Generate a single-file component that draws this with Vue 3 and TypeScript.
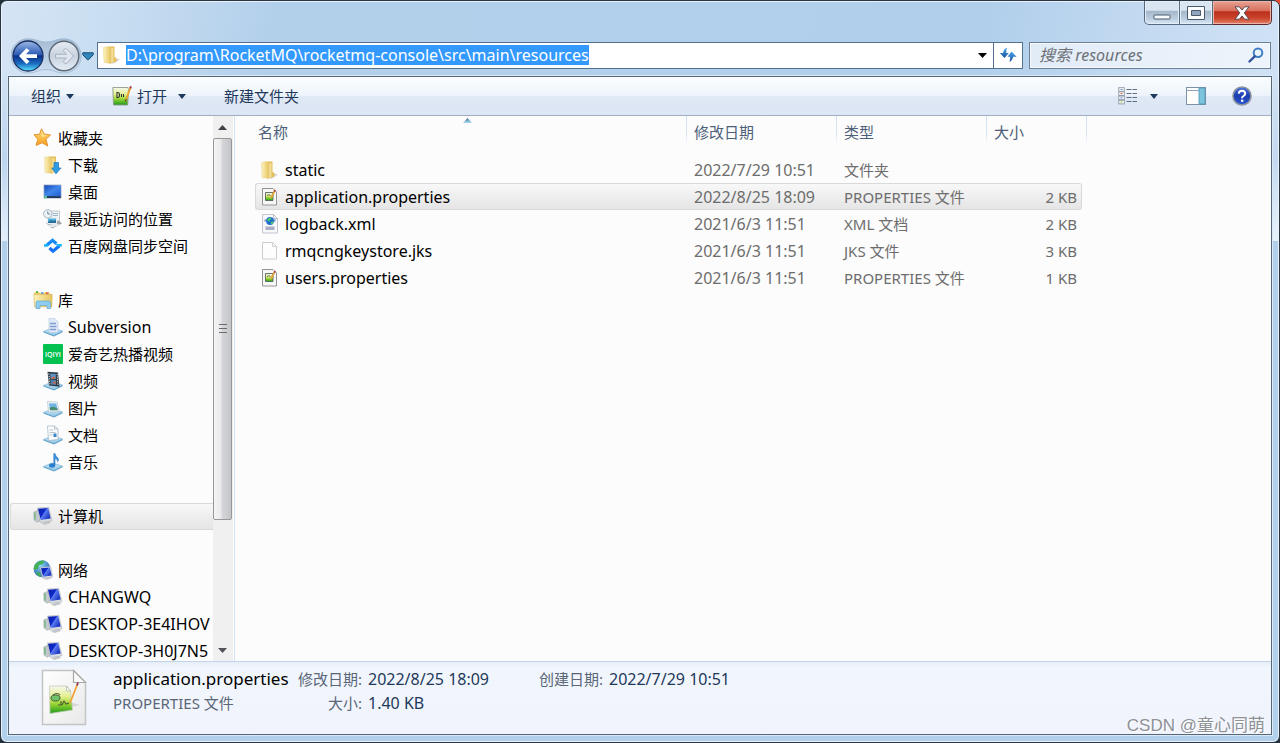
<script setup lang="ts">
import { onMounted, ref } from 'vue'

interface NavItem {
  label: string
  icon: string
}
interface NavGroup extends NavItem {
  selected?: boolean
  children: NavItem[]
}
interface FileRow {
  name: string
  icon: string
  modified: string
  type: string
  size: string
}

const path = ref('D:\\program\\RocketMQ\\rocketmq-console\\src\\main\\resources')
const query = ref('')
const addressInput = ref<HTMLInputElement | null>(null)
const selectedFile = ref('application.properties')

const groups: NavGroup[] = [
  {
    label: '收藏夹',
    icon: 'star',
    children: [
      { label: '下载', icon: 'download' },
      { label: '桌面', icon: 'desktop' },
      { label: '最近访问的位置', icon: 'recent' },
      { label: '百度网盘同步空间', icon: 'netdisk' },
    ],
  },
  {
    label: '库',
    icon: 'library',
    children: [
      { label: 'Subversion', icon: 'lib-svn' },
      { label: '爱奇艺热播视频', icon: 'iqiyi' },
      { label: '视频', icon: 'lib-video' },
      { label: '图片', icon: 'lib-picture' },
      { label: '文档', icon: 'lib-doc' },
      { label: '音乐', icon: 'lib-music' },
    ],
  },
  { label: '计算机', icon: 'computer', selected: true, children: [] },
  {
    label: '网络',
    icon: 'network',
    children: [
      { label: 'CHANGWQ', icon: 'computer' },
      { label: 'DESKTOP-3E4IHOV', icon: 'computer' },
      { label: 'DESKTOP-3H0J7N5', icon: 'computer' },
    ],
  },
]

const files: FileRow[] = [
  { name: 'static', icon: 'folder', modified: '2022/7/29 10:51', type: '文件夹', size: '' },
  { name: 'application.properties', icon: 'properties', modified: '2022/8/25 18:09', type: 'PROPERTIES 文件', size: '2 KB' },
  { name: 'logback.xml', icon: 'xml', modified: '2021/6/3 11:51', type: 'XML 文档', size: '2 KB' },
  { name: 'rmqcngkeystore.jks', icon: 'blank', modified: '2021/6/3 11:51', type: 'JKS 文件', size: '3 KB' },
  { name: 'users.properties', icon: 'properties', modified: '2021/6/3 11:51', type: 'PROPERTIES 文件', size: '1 KB' },
]

const isLatin = (label: string) => /^[\x20-\x7e]+$/.test(label)

onMounted(() => {
  addressInput.value?.focus()
  addressInput.value?.select()
})
</script>

<template>
  <svg class="sprite" aria-hidden="true">
    <defs>
      <linearGradient id="g-folder" x1="0" x2="1"><stop offset="0" stop-color="#fdf3c0" /><stop offset="1" stop-color="#e6c35c" /></linearGradient>
      <linearGradient id="g-star" x1="0" y1="0" x2="0" y2="1"><stop offset="0" stop-color="#ffe27a" /><stop offset="1" stop-color="#f59a1c" /></linearGradient>
      <linearGradient id="g-screen" x1="0" y1="0" x2="1" y2=".6"><stop offset="0" stop-color="#0a1fa8" /><stop offset=".5" stop-color="#1029c8" /><stop offset=".55" stop-color="#5c7cf2" /><stop offset="1" stop-color="#1b35c0" /></linearGradient>
      <linearGradient id="g-desk" x1="0" y1="0" x2="1" y2="1"><stop offset="0" stop-color="#1746b8" /><stop offset=".5" stop-color="#3f86ea" /><stop offset="1" stop-color="#1f5fd0" /></linearGradient>
      <linearGradient id="g-page" x1="0" y1="0" x2="1" y2="1"><stop offset="0" stop-color="#ffffff" /><stop offset="1" stop-color="#e9e9e9" /></linearGradient>
      <linearGradient id="g-green" x1="0" y1="0" x2="0" y2="1"><stop offset="0" stop-color="#f4f8ee" /><stop offset=".4" stop-color="#e4ee8a" /><stop offset=".65" stop-color="#9ad432" /><stop offset="1" stop-color="#1c9a1c" /></linearGradient>
      <linearGradient id="g-tray" x1="0" y1="0" x2="0" y2="1"><stop offset="0" stop-color="#cfe9f7" /><stop offset="1" stop-color="#8cc4e4" /></linearGradient>
      <radialGradient id="g-globe" cx=".4" cy=".3" r=".8"><stop offset="0" stop-color="#8fd4ff" /><stop offset="1" stop-color="#12529e" /></radialGradient>
      <linearGradient id="g-back" x1="0" y1="0" x2="0" y2="1"><stop offset="0" stop-color="#9db8e6" /><stop offset=".45" stop-color="#2c5cb4" /><stop offset=".5" stop-color="#0b2f86" /><stop offset=".75" stop-color="#1a6cc0" /><stop offset="1" stop-color="#58e4ff" /></linearGradient>
      <linearGradient id="g-fwd" x1="0" y1="0" x2="0" y2="1"><stop offset="0" stop-color="#e6ecf3" /><stop offset=".5" stop-color="#c9d3df" /><stop offset="1" stop-color="#e4edf6" /></linearGradient>
      <linearGradient id="g-pod" x1="0" y1="0" x2="0" y2="1"><stop offset="0" stop-color="#a3bbd3" /><stop offset="1" stop-color="#cfe0f2" /></linearGradient>
      <linearGradient id="g-help" x1="0" y1="0" x2="0" y2="1"><stop offset="0" stop-color="#4f74dc" /><stop offset=".5" stop-color="#1b3cae" /><stop offset="1" stop-color="#2a5ad0" /></linearGradient>
      <linearGradient id="g-refresh" x1="0" y1="0" x2="0" y2="1"><stop offset="0" stop-color="#49a7e6" /><stop offset="1" stop-color="#1a4f9e" /></linearGradient>
      <linearGradient id="g-sort" x1="0" y1="0" x2="0" y2="1"><stop offset="0" stop-color="#2f6a90" /><stop offset="1" stop-color="#b4dff6" /></linearGradient>
    </defs>

    <symbol id="star" viewBox="0 0 20 20">
      <path d="M8.500 .8 11.200 6 17.600 7 13 11.200 14.800 18 9 14.800 3 17.500 4.800 11.300 1 6.800 6.600 6.200Z" fill="url(#g-star)" stroke="#e38b28" stroke-width=".9" stroke-linejoin="round" />
      <path d="M8.500 3 10.200 7 14.500 7.800 9 9Z" fill="#fff3b8" opacity=".7" />
    </symbol>
    <symbol id="folder" viewBox="0 0 20 20">
      <path d="M14 13.500 18 14.500 12 18.500 9 18.500Z" fill="#888" opacity=".35" />
      <path d="M6 1.500 12.500 1.500 12.500 12 14.500 13 14.500 16.500 8 18.500Z" fill="#e3c05c" />
      <path d="M8.500 3.500 11.500 3 11.500 17 9 18Z" fill="#f3dd94" />
      <path d="M1.500 2.500 6.500 1.500 9 4 9 18.500 2 17.500Z" fill="url(#g-folder)" stroke="#e3cd84" stroke-width=".5" />
    </symbol>
    <symbol id="download" viewBox="0 0 20 20">
      <path d="M6 1.500 13 1.500 13 12 14 16.500 8 18.500Z" fill="#e3c05c" />
      <path d="M8.500 3.500 11.500 3 11.500 17 9 18Z" fill="#f3dd94" />
      <path d="M1.500 2.500 6.500 1.500 9 4 9 18.500 2 17.500Z" fill="url(#g-folder)" stroke="#e3cd84" stroke-width=".5" />
      <path d="M11 7.500h4.500v5.500h2.500L13 18.800 8.800 13H11Z" fill="#2d9be4" stroke="#1a72b8" stroke-width=".7" />
    </symbol>
    <symbol id="desktop" viewBox="0 0 20 20">
      <rect x=".5" y="2.500" width="18" height="14" fill="#a9b6c9" />
      <rect x="1.300" y="3.300" width="16.500" height="10.800" fill="url(#g-desk)" />
      <path d="M1.300 14.100h16.500v1.900H1.300Z" fill="#20365e" />
      <circle cx="2.600" cy="15" r="1.500" fill="#57c4a0" />
    </symbol>
    <symbol id="recent" viewBox="0 0 20 20">
      <path d="M3 14 13 9 19 14.500 9 19.500Z" fill="#9ea3a8" />
      <path d="M8 2h8.500v10H8Z" fill="#f0f3f5" stroke="#aab2b8" stroke-width=".7" />
      <path d="M10 4.500h5M10 6.500h5" stroke="#9db6c8" stroke-width="1" />
      <path d="M4.500 9h9v5.500h-9Z" fill="#4cb2d8" stroke="#e7eef2" stroke-width="1" />
      <path d="M5 13l3-2 2 1 3-1v3H5Z" fill="#2b6e9c" />
      <path d="M3.500 16 14 14.500l3 1.500-8 2.500Z" fill="#e6e9eb" />
      <circle cx="4.800" cy="4.800" r="4.200" fill="#eef5f9" stroke="#a3b3bf" stroke-width="1" />
      <path d="M4.800 2.200v2.800h2.400" fill="none" stroke="#5c7c92" stroke-width=".9" />
    </symbol>
    <symbol id="netdisk" viewBox="0 0 20 20">
      <path d="M3.500 9.500 9.500 4.300l4 3.400" fill="none" stroke="#168bf8" stroke-width="3.200" />
      <path d="M1 8.300h4.500l-1.500 2.400H1Z" fill="#13b7fb" />
      <path d="M6.500 12 10 15.200 16.500 9.700" fill="none" stroke="#1673f5" stroke-width="3.200" />
      <path d="M13.200 8h5.600v2.400h-5Z" fill="#16b6fb" />
    </symbol>
    <symbol id="library" viewBox="0 0 20 20">
      <path d="M1 3.500 2 2h4l1 1.200h4l1-1.200 4 .2 1 2 2 .3V17H1.500Z" fill="#eccb69" />
      <path d="M.8 4.500h18.400l-.4 12.300H1.600Z" fill="url(#g-folder)" stroke="#d8b75a" stroke-width=".6" />
      <path d="M3 2h2" stroke="#39b04a" stroke-width="1.500" /><path d="M8 3h2.500" stroke="#4b8fdb" stroke-width="1.500" /><path d="M13 3.200h2.500" stroke="#d65b4c" stroke-width="1.500" />
      <path d="M3 18.500v-6q0-1.500 1.500-1.500h11.500q1.500 0 1.500 1.500v6h-3.500v-3H7v3Z" fill="#8fcdf0" stroke="#5ea7d2" stroke-width=".7" />
    </symbol>
    <symbol id="tray" viewBox="0 0 20 20">
      <path d="M.5 14.500 9 11 19.500 14 11 18.500Z" fill="url(#g-tray)" stroke="#6fabd0" stroke-width=".6" />
      <path d="M.5 14.500 11 18.500 19.500 14v1.300L11 19.600.5 15.500Z" fill="#5d9fca" />
    </symbol>
    <symbol id="lib-svn" viewBox="0 0 20 20">
      <use href="#tray" />
      <path d="M6 1.500h6l3 3.500v10.500H6Z" fill="#dfe9f7" stroke="#b4c7e0" stroke-width=".6" />
      <path d="M7 6.500h6M7 9.500h6.500M7 12.500h6" stroke="#7f9fd2" stroke-width="1.600" />
    </symbol>
    <symbol id="iqiyi" viewBox="0 0 20 20">
      <rect width="20" height="20" rx="1" fill="#05c14f" />
    </symbol>
    <symbol id="lib-video" viewBox="0 0 20 20">
      <use href="#tray" />
      <path d="M4.500 .8 15 1.500 16.500 15.800 6 14.500Z" fill="#2f3a44" />
      <path d="M7.200 2.500 12.800 3v5L7.500 7.500Z" fill="#5d93c4" /><path d="M7.500 8.500 13 9v5l-5-.5Z" fill="#4b7fae" />
      <path d="M8 6.500l4-1v2l-4 .3ZM9 12l3.500-2v3Z" fill="#d8694a" />
      <path d="M5.800 2.500 7 14M14.200 3 15 15" stroke="#dfe6ea" stroke-width="1" stroke-dasharray="1.200 1.200" />
    </symbol>
    <symbol id="lib-picture" viewBox="0 0 20 20">
      <use href="#tray" />
      <path d="M4.500 3.500 14 4l2.500 9.500-11 .5Z" fill="#f3f6f8" stroke="#a8b9c6" stroke-width=".6" />
      <path d="M6 5.200l7.200.3 1.600 6.500-7.800.3Z" fill="#6fb4e2" /><path d="M6.700 9.500 11 8.800l3.600 2 .2 1.400-7.800.1Z" fill="#4a8b70" />
    </symbol>
    <symbol id="lib-doc" viewBox="0 0 20 20">
      <use href="#tray" />
      <path d="M4.500 1h7l3.500 3v10.500l-9.500 1Z" fill="#fbfcfd" stroke="#9fb1c0" stroke-width=".7" />
      <path d="M11.500 1v3h3.500M6.500 5h4M6.500 7.500h6M6.500 10h3" fill="none" stroke="#a8b6c2" stroke-width=".8" />
      <rect x="10.500" y="8.500" width="3" height="3.500" fill="#3b86cc" />
    </symbol>
    <symbol id="lib-music" viewBox="0 0 20 20">
      <use href="#tray" />
      <ellipse cx="9" cy="13.500" rx="3" ry="2.200" fill="#2b7fd0" />
      <path d="M10.800 13.500V1.500h1.200q.5 3 3.200 4.800 1 1.500-.6 3.500.4-2.500-2.600-3.200v7Z" fill="#3a96e0" stroke="#1f6bb4" stroke-width=".5" />
    </symbol>
    <symbol id="computer" viewBox="0 0 20 20">
      <path d="M.8 6 4 4.500l3 1V15l-3 1.200L1 14Z" fill="#c3c8cd" stroke="#989ea5" stroke-width=".5" />
      <path d="M2 6.500v7" stroke="#43b049" stroke-width=".9" />
      <path d="M8 17.500 16 14.500l2 2.500-6.500 2Z" fill="#c3c7cb" />
      <path d="M4.300 2 15.800 1.300l3.200 13.500-11.500 1.700Z" fill="#d9dde1" stroke="#a4aab1" stroke-width=".5" />
      <path d="M5 2.800 15.200 2.100l2.500 10.500-10 1.300Z" fill="url(#g-screen)" />
    </symbol>
    <symbol id="network" viewBox="0 0 20 20">
      <circle cx="9" cy="8.800" r="8.500" fill="url(#g-globe)" />
      <path d="M3 3.500Q8-.5 12 1l-3 3.500-3 .5-1 4-3.800 1Q0 6 3 3.500ZM3 12l4 .5 1 4.500q-4-1-5-5Z" fill="#44b054" />
      <path d="M10 18.500 17 16.500l1.500 2-5 1.500Z" fill="#c9cdd1" />
      <path d="M7 7.500 17.500 6.500l2.300 10.500L9.500 18.300Z" fill="#d9dde1" stroke="#a4aab1" stroke-width=".5" />
      <path d="M8 8.300 16.800 7.500l1.900 8-8.600 1.200Z" fill="url(#g-screen)" />
    </symbol>
    <symbol id="blank" viewBox="0 0 20 20">
      <path d="M2.500 1.500h10l4 4v12.500h-14Z" fill="#fdfdfd" stroke="#cccccc" stroke-width="1" />
      <path d="M12.500 1.500v4h4" fill="none" stroke="#cccccc" stroke-width=".9" />
    </symbol>
    <symbol id="properties" viewBox="0 0 20 20">
      <path d="M2.500 1.500h10.500l3.500 3.500v13h-14Z" fill="#f7f7f7" stroke="#949494" stroke-width="1" />
      <path d="M5.500 5.500h7.500v8h-7.500Z" fill="url(#g-green)" stroke="#56625a" stroke-width=".9" />
      <path d="M7 8.500q2-1.500 3.500 0" fill="none" stroke="#555" stroke-width=".9" />
      <path d="M14.600 4 11 11" stroke="#e0a13a" stroke-width="1.700" /><path d="M15 3l-.6 1.600" stroke="#b03b3b" stroke-width="1.700" />
    </symbol>
    <symbol id="xml" viewBox="0 0 20 20">
      <path d="M2.500 .5h11l4 4v14.500h-15Z" fill="#f7f8fb" stroke="#c3c6d0" stroke-width="1" />
      <path d="M13.500 .5v4h4" fill="none" stroke="#b4b8c4" />
      <path d="M4.500 6.500h2M13 6.500h2.500" stroke="#6f8fbf" stroke-width="2" />
      <circle cx="10" cy="7" r="3.900" fill="#1f6fd0" /><path d="M7 6q1-3 4.500-2.500l-1 2.500-2 1.500ZM11 8l2.500-.8-1 3-1.500-.2Z" fill="#4fca62" />
      <path d="M5.500 12.500h9v3.500h-9Z" fill="#a9adc6" />
    </symbol>
    <symbol id="editor" viewBox="0 0 20 20">
      <path d="M.8 1.500h15l.7 2-.8 15.500H1.500Z" fill="url(#g-green)" stroke="#8f9b8a" stroke-width=".9" />
      <path d="M5 6v6M5 6.500q2.500-.5 2.500 2.500t-2.500 2.500M9.500 8v3M11.500 8v3" fill="none" stroke="#30363a" stroke-width="1.100" />
      <path d="M18.500 1.500 14 14" stroke="#f0a12c" stroke-width="1.800" /><path d="M19 .3 18.200 2.300" stroke="#b13a4a" stroke-width="2" /><path d="M14.200 13.300 13.500 15.500" stroke="#5c4630" stroke-width="1.200" />
    </symbol>
  </svg>

  <div class="window">
    <header class="frame-top">
      <div class="caption">
        <button type="button" class="cap" aria-label="最小化">
          <svg width="18" height="8" viewBox="0 0 18 8"><rect x="1" y="2" width="16" height="4" rx=".5" fill="#f7fafd" stroke="#4b5a6b" /></svg>
        </button>
        <button type="button" class="cap cap-max" aria-label="最大化">
          <svg width="18" height="14" viewBox="0 0 18 14"><path d="M.5.5h17v13H.5Z" fill="#fbfcfd" stroke="#4b5a6b" /><path d="M4.500 4.500h9v5h-9Z" fill="#8fa6be" stroke="#4b5a6b" /></svg>
        </button>
        <button type="button" class="cap cap-close" aria-label="关闭">
          <svg width="16" height="14" viewBox="0 0 16 14"><path d="M1 .8h4.300L8 4 10.700.8H15L10.300 7 15 13.200h-4.300L8 10l-2.700 3.200H1L5.700 7Z" fill="#fbfbfb" stroke="#5b4a55" /></svg>
        </button>
      </div>

      <div class="bar">
        <nav class="travel" aria-label="导航">
          <svg class="pod" width="72" height="36" viewBox="0 0 72 36">
            <path d="M17 .8C25 .8 27 4 35 4S45 .8 53 .8A17 17 0 0 1 53 35C45 35 43 31.500 35 31.500S25 35 17 35A17 17 0 0 1 17 .8Z" fill="url(#g-pod)" stroke="#9db6d0" stroke-width=".8" />
          </svg>
          <button type="button" class="orb" aria-label="后退">
            <svg width="32" height="32" viewBox="0 0 32 32">
              <circle cx="16" cy="16" r="15" fill="url(#g-back)" stroke="#1a2f63" stroke-width="1.300" />
              <path d="M7 16 14.500 8.300 17.500 10.500 14 14.300H25v3.700H14l3.500 3.600-3 2.400Z" fill="#fff" />
            </svg>
          </button>
          <button type="button" class="orb" aria-label="前进">
            <svg width="32" height="32" viewBox="0 0 32 32">
              <circle cx="16" cy="16" r="14.800" fill="url(#g-fwd)" stroke="#5f6a78" stroke-width="1.500" />
              <path d="M25.500 16 18 8.300 15 10.500 18.500 14.300H7.500v3.700h11L15 21.600l3 2.400Z" fill="#dfe6ed" stroke="#a3afbc" stroke-width=".9" />
            </svg>
          </button>
          <button type="button" class="recent-btn" aria-label="最近的页面">
            <svg width="12" height="9" viewBox="0 0 12 9"><path d="M.8.8h10.400v2L6.500 7.800h-1L.8 2.800Z" fill="#2f86b8" stroke="#1c4a78" stroke-width="1" /></svg>
          </button>
        </nav>

        <div class="address">
          <svg class="icon" aria-hidden="true"><use href="#folder" /></svg>
          <input ref="addressInput" v-model="path" class="address-input" type="text" aria-label="地址" spellcheck="false" />
          <button type="button" class="address-drop" aria-label="以前的位置">
            <svg width="9" height="5" viewBox="0 0 9 5"><path d="M0 0h9L4.500 5Z" fill="#000" /></svg>
          </button>
          <button type="button" class="refresh" aria-label="刷新">
            <svg width="18" height="16" viewBox="0 0 18 16">
              <path d="M8 .8Q5 1.500 4 6H.8L5.500 11 9.800 6H7.300Q7 3 8 .8Z" fill="url(#g-refresh)" />
              <path d="M10.500 15.200Q13.500 13.500 14.300 9.800h3.300L12.500 4.500 8.500 9.800H11Q11.500 12.500 10.500 15.200Z" fill="url(#g-refresh)" />
            </svg>
          </button>
        </div>

        <div class="search">
          <input v-model="query" class="search-input" type="text" placeholder="搜索 resources" aria-label="搜索 resources" />
          <button type="button" class="search-btn" aria-label="搜索">
            <svg width="16" height="16" viewBox="0 0 16 16"><circle cx="10" cy="5.700" r="4.300" fill="#eaf4fc" stroke="#3f7cc4" stroke-width="2" /><path d="M6.700 9.300 1.500 14.500" stroke="#31529c" stroke-width="2.400" stroke-linecap="round" /></svg>
          </button>
        </div>
      </div>
    </header>

    <div class="client">
      <div class="toolbar" role="toolbar">
        <button type="button" class="tool">组织<svg class="arrow" width="8" height="5" viewBox="0 0 8 5"><path d="M0 0h8L4 5Z" fill="#1e395b" /></svg></button>
        <button type="button" class="tool"><svg class="icon" aria-hidden="true"><use href="#editor" /></svg>打开<svg class="arrow arrow-split" width="8" height="5" viewBox="0 0 8 5"><path d="M0 0h8L4 5Z" fill="#1e395b" /></svg></button>
        <button type="button" class="tool">新建文件夹</button>
        <div class="tools-right">
          <button type="button" class="tool tool-view" aria-label="更改您的视图">
            <svg width="20" height="18" viewBox="0 0 20 18">
              <g fill="#fff" stroke="#8b97a5" stroke-width=".9"><rect x=".8" y=".7" width="5.500" height="3.600" /><rect x=".8" y="4.900" width="5.500" height="3.600" /><rect x=".8" y="9.100" width="5.500" height="3.600" /><rect x=".8" y="13.300" width="5.500" height="3.600" /></g>
              <path d="M2.500 2.500h2" stroke="#5b89c8" /><path d="M2.500 6.700h2" stroke="#d14b3c" /><path d="M2.500 10.900h2" stroke="#4779c4" /><path d="M2.500 15.100h2" stroke="#8ab43c" />
              <path d="M8.500 2.500h5M14.500 2.500h4.500M8.500 6.500h5M14.500 6.500h4.500M8.500 10.500h5M14.500 10.500h4.500M8.500 14.500h5M14.500 14.500h4.500" stroke="#5f6f82" />
            </svg>
            <svg width="8" height="5" viewBox="0 0 8 5"><path d="M0 0h8L4 5Z" fill="#1e395b" /></svg>
          </button>
          <button type="button" class="tool" aria-label="显示预览窗格">
            <svg width="20" height="18" viewBox="0 0 20 18"><rect x=".5" y=".5" width="19" height="17" fill="#fdfdfd" stroke="#7e92a8" /><path d="M1 3.500h12" stroke="#8fa4ba" /><rect x="13" y="1" width="6" height="16" fill="#7cc3dd" stroke="#4e93b5" stroke-width=".8" /></svg>
          </button>
          <button type="button" class="tool" aria-label="获取帮助">
            <svg width="20" height="20" viewBox="0 0 20 20"><circle cx="10" cy="10" r="9" fill="url(#g-help)" stroke="#8d94a0" stroke-width="1.600" /><path d="M6.800 7.600Q7 4.800 10 4.800t3.200 2.700Q13.200 9 11.500 10T10.200 12.300" fill="none" stroke="#fff" stroke-width="2" /><circle cx="10.200" cy="14.800" r="1.300" fill="#fff" /></svg>
          </button>
        </div>
      </div>

      <div class="body">
        <aside class="sidebar">
          <div class="tree">
            <ul v-for="group in groups" :key="group.label" class="group">
              <li>
                <a href="#" class="node" :class="{ selected: group.selected }" @click.prevent>
                  <svg class="icon" aria-hidden="true"><use :href="'#' + group.icon" /></svg>{{ group.label }}
                </a>
              </li>
              <li v-for="item in group.children" :key="item.label">
                <a href="#" class="node child" :class="{ latin: isLatin(item.label) }" @click.prevent>
                  <svg class="icon" aria-hidden="true">
                    <use :href="'#' + item.icon" />
                    <text v-if="item.icon === 'iqiyi'" x="10" y="13" text-anchor="middle" class="iqiyi-text">iQIYI</text>
                  </svg>{{ item.label }}
                </a>
              </li>
            </ul>
          </div>
          <div class="scroll">
            <button type="button" class="scroll-btn" aria-label="向上滚动"><svg width="9" height="5" viewBox="0 0 9 5"><path d="M0 5h9L4.500 0Z" fill="#404347" /></svg></button>
            <div class="thumb"><span class="grip"></span></div>
            <button type="button" class="scroll-btn scroll-down" aria-label="向下滚动"><svg width="9" height="5" viewBox="0 0 9 5"><path d="M0 0h9L4.500 5Z" fill="#505357" /></svg></button>
          </div>
        </aside>

        <main class="list">
          <table class="files">
            <colgroup>
              <col class="c-name" />
              <col class="c-mid" />
              <col class="c-mid" />
              <col class="c-size" />
              <col class="c-end" />
            </colgroup>
            <thead>
              <tr>
                <th scope="col">名称<svg class="sort" width="9" height="5" viewBox="0 0 9 5"><path d="M0 5 4.500 0 9 5Z" fill="url(#g-sort)" /></svg></th>
                <th scope="col">修改日期</th>
                <th scope="col">类型</th>
                <th scope="col" colspan="2">大小</th>
              </tr>
            </thead>
            <tbody>
              <tr v-for="file in files" :key="file.name" :class="{ picked: file.name === selectedFile }" @click="selectedFile = file.name">
                <td class="name latin"><svg class="icon" aria-hidden="true"><use :href="'#' + file.icon" /></svg>{{ file.name }}</td>
                <td class="latin">{{ file.modified }}</td>
                <td>{{ file.type }}</td>
                <td class="size">{{ file.size }}</td>
              </tr>
            </tbody>
          </table>
        </main>
      </div>

      <footer class="details">
        <svg class="thumbnail" width="46" height="58" viewBox="0 0 46 58" aria-hidden="true">
          <path d="M1.500 1.500h31l12 12v42h-43Z" fill="url(#g-page)" stroke="#c4c4c4" stroke-width="1.500" />
          <path d="M32.500 1.500v12h12Z" fill="#fafafa" stroke="#a8a8a8" stroke-width="1.200" />
          <path d="M28 33l11 3-9 2Z" fill="#bbb" opacity=".5" />
          <path d="M8.500 17h17l4 5 2 19L9 44.500Z" fill="url(#g-green)" stroke="#c3cbb8" stroke-width=".8" />
          <path d="M25.500 17v5h4Z" fill="#fff" stroke="#a9b3a0" stroke-width=".7" />
          <ellipse cx="14.500" cy="29" rx="4.500" ry="3" fill="#6fc46a" stroke="#3c5c3c" stroke-width="1" />
          <path d="M12 26q4-3 7 0M17 36h3v-4M21 36l2-4 2 3 3-1" fill="none" stroke="#4a5a34" stroke-width="1.100" />
          <path d="M36.500 15 29 34" stroke="#f0a33a" stroke-width="1.800" /><path d="M37 13.500 36 16.500" stroke="#8c3b55" stroke-width="1.800" />
        </svg>
        <dl class="facts">
          <dt class="file-name">application.properties</dt>
          <dd class="label">修改日期:</dd>
          <dd class="value">2022/8/25 18:09</dd>
          <dd class="label">创建日期:</dd>
          <dd class="value">2022/7/29 10:51</dd>
          <dd class="kind">PROPERTIES 文件</dd>
          <dd class="label">大小:</dd>
          <dd class="value">1.40 KB</dd>
        </dl>
      </footer>
    </div>
    <div class="watermark">CSDN @童心同萌</div>
  </div>
</template>

<style>
html {
  background: linear-gradient(#e8492f, #e8492f) right top / 7px 5px no-repeat #23303c;
}
body {
  margin: 0;
}
</style>

<style scoped>
.sprite {
  position: absolute;
  width: 0;
  height: 0;
}
.iqiyi-text {
  font: 600 7px "Open Sans", sans-serif;
  fill: #fff;
}
.window {
  position: relative;
  box-sizing: border-box;
  display: flex;
  flex-direction: column;
  height: 100vh;
  padding: 0 7px 7px;
  border: 1px solid #2b3540;
  border-radius: 7px;
  box-shadow: inset 0 0 0 1px #e8f3fd;
  background:
    linear-gradient(#d0e1f3, #bcd5ee 50%, #e4effa) left 76px / 7px 164px no-repeat,
    linear-gradient(#d0e1f3, #c3d9f0 50%, #e8f2fb) right 76px / 7px 164px no-repeat,
    linear-gradient(100deg, #d5e4f4 0, #cbdff2 90px, #b3d0eb 270px, #b1cfeb 75%, #cadef3 92%, #d3e3f5 100%) left top / 100% 240px no-repeat,
    #b2cfeb;
  font-family: "Noto Sans", "Noto Sans CJK SC", sans-serif;
  font-size: 15px;
  line-height: 20px;
}
button {
  display: flex;
  align-items: center;
  justify-content: center;
  padding: 0;
  border: 0;
  background: none;
  font: inherit;
  color: inherit;
}
.icon {
  flex: none;
  width: 20px;
  height: 20px;
}
.latin {
  font-size: 16px;
}

.caption {
  display: flex;
  justify-content: flex-end;
  height: 35px;
}
.cap {
  width: 36px;
  height: 24px;
  border: 1px solid #56697d;
  border-top: 0;
  border-radius: 0 0 0 5px;
  background: linear-gradient(#d9e5f1 0 40%, #a5b8cb 45%, #b9cbdd 75%, #d8e7f5);
  box-shadow: inset 0 0 0 1px #e4eef8;
}
.cap:first-child svg {
  margin-top: 8px;
}
.cap-max {
  width: 33px;
  border-left: 0;
  border-radius: 0;
}
.cap-close {
  width: 59px;
  border-color: #5d2a2c;
  border-left: 0;
  border-radius: 0 0 5px 0;
  background: linear-gradient(#e6a394 0, #d9705d 42%, #bd2f1c 47%, #c9452c 75%, #e8826a);
  box-shadow: inset 0 0 0 1px #eab5a8;
}

.bar {
  display: flex;
  align-items: center;
  height: 38px;
  margin-right: 1px;
  padding: 0 0 2px 3px;
}
.travel {
  position: relative;
  display: flex;
  align-items: center;
  width: 86px;
  height: 36px;
  margin-top: 2px;
}
.pod {
  position: absolute;
  left: 0;
  top: 0;
}
.orb {
  position: relative;
  margin-left: 1px;
  margin-right: 3px;
}
.recent-btn {
  margin-left: -1px;
}
.address {
  display: flex;
  flex: 1;
  align-items: stretch;
  box-sizing: border-box;
  height: 27px;
  border: 1px solid #54708f;
  background: #fff;
}
.address .icon {
  align-self: center;
  margin: 0 4px;
}
.address-input {
  flex: 1;
  min-width: 0;
  height: 20px;
  margin: auto 0;
  padding: 0;
  border: 0;
  outline: 0;
  background: transparent;
  font: inherit;
  font-size: 16px;
}
.address-input::selection {
  background: #3399ff;
  color: #fff;
}
.address-drop {
  width: 21px;
}
.refresh {
  width: 29px;
  border-left: 1px solid #54708f;
}
.search {
  display: flex;
  align-items: center;
  box-sizing: border-box;
  width: 242px;
  height: 27px;
  margin-left: 6px;
  padding: 0 6px 0 9px;
  border: 1px solid #6c8096;
  box-shadow: inset 0 0 0 1px #f5f9fd;
  background: linear-gradient(100deg, #e2ecf7, #eef4fb);
}
.search-input {
  flex: 1;
  min-width: 0;
  padding: 0;
  border: 0;
  outline: 0;
  background: transparent;
  font: italic 16px/20px "Noto Sans", "Noto Sans CJK SC", sans-serif;
}
.search-input::placeholder {
  color: #6d7177;
  opacity: 1;
}

.client {
  display: flex;
  flex: 1;
  flex-direction: column;
  min-height: 0;
  border: 1px solid #566878;
  background: #fcfcfc;
  box-shadow: 0 0 0 1px #d9e9f8;
}
.toolbar {
  display: flex;
  flex: none;
  align-items: center;
  gap: 38px;
  height: 38px;
  padding: 0 19px 0 22px;
  border-bottom: 1px solid #a0afc3;
  background: linear-gradient(#fbfdff, #eef4fb 48%, #dfe8f5 52%, #dce6f4);
  color: #1e395b;
}
.tool .icon {
  margin-right: 5px;
}
.arrow {
  margin-left: 5px;
}
.arrow-split {
  margin-left: 11px;
}
.tools-right {
  display: flex;
  align-items: center;
  gap: 26px;
  margin-left: auto;
}
.tool-view {
  gap: 12px;
  margin-right: 2px;
}

.body {
  display: flex;
  flex: 1;
  min-height: 0;
}
.sidebar {
  display: flex;
  flex: none;
  width: 225px;
  border-right: 1px solid #d6e5f5;
}
.tree {
  flex: 1;
  overflow: hidden;
  padding-top: 9px;
}
.group {
  margin: 0 0 27px;
  padding: 0;
  list-style: none;
}
.node {
  display: flex;
  align-items: center;
  gap: 5px;
  box-sizing: border-box;
  height: 27px;
  margin-left: 1px;
  padding: 0 0 2px 22px;
  border: 1px solid transparent;
  color: #000;
  text-decoration: none;
  white-space: nowrap;
}
.child {
  padding-left: 32px;
}
.selected {
  border-color: #d9d9d9;
  border-right: 0;
  border-radius: 3px 0 0 3px;
  background: linear-gradient(#f8f8f8, #e5e5e5);
}
.scroll {
  display: flex;
  flex-direction: column;
  width: 20px;
  margin-right: 1px;
  background: #f0f0f0;
}
.scroll-btn {
  flex: none;
  width: 19px;
  height: 22px;
}
.scroll-down {
  margin-top: auto;
}
.thumb {
  display: flex;
  flex: none;
  align-items: center;
  justify-content: center;
  box-sizing: border-box;
  width: 19px;
  height: 70%;
  border: 1px solid #979797;
  border-radius: 2px;
  background: linear-gradient(90deg, #f5f5f5, #e9e9eb 40%, #d4d5d9 50%, #c4c5c9);
}
.grip {
  width: 8px;
  height: 9px;
  background: repeating-linear-gradient(#6b6b6b 0 1px, transparent 1px 4px);
}

.list {
  flex: 1;
  min-width: 0;
  padding-left: 20px;
  overflow: hidden;
}
.files {
  table-layout: fixed;
  width: 832px;
  border-spacing: 0;
}
.c-name {
  width: 432px;
}
.c-mid {
  width: 150px;
}
.c-size {
  width: 95px;
}
.c-end {
  width: 5px;
}
th {
  position: relative;
  height: 32px;
  padding: 0 0 8px 7px;
  background: linear-gradient(#d3e3f5 60%, transparent) right top / 1px 28px no-repeat;
  color: #4c607a;
  font-weight: normal;
  text-align: left;
}
th:first-child {
  padding-left: 3px;
}
.sort {
  position: absolute;
  top: 2px;
  left: 208px;
}
td {
  box-sizing: border-box;
  height: 27px;
  padding: 0 0 0 7px;
  border: solid transparent;
  border-width: 1px 0;
  color: #6d6d6d;
  white-space: nowrap;
}
.name {
  display: flex;
  align-items: center;
  gap: 5px;
  padding-left: 4px;
  border-left-width: 1px;
  color: #000;
}
.size {
  padding: 0 4px 0 0;
  border-right-width: 1px;
  text-align: right;
}
.picked td {
  border-color: #d9d9d9;
  background: linear-gradient(#f8f8f8, #e5e5e5);
}
.picked .name {
  border-radius: 3px 0 0 3px;
}
.picked .size {
  border-radius: 0 3px 3px 0;
}

.details {
  display: flex;
  flex: none;
  height: 65px;
  padding: 7px 0 0 32px;
  border-top: 1px solid #c3d5e8;
  background: linear-gradient(#e6eef8, #f1f5fc 5px, #f1f4fc);
}
.thumbnail {
  flex: none;
}
.facts {
  display: grid;
  grid-template-columns: 179px 70px 171px 70px auto;
  grid-auto-rows: 24px;
  align-content: start;
  align-items: center;
  margin: -2px 0 0 26px;
}
.facts dd {
  margin: 0;
}
.file-name {
  color: #000;
  font-size: 17px;
}
.label {
  color: #5a6779;
  text-align: right;
}
.facts .value {
  padding-left: 6px;
  color: #1e395b;
  font-size: 16px;
}
.kind {
  color: #5a6779;
}
.watermark {
  position: absolute;
  right: 14px;
  bottom: 4px;
  color: #8e9196;
  font: 17px/24px "Liberation Sans", "Noto Sans CJK SC", sans-serif;
  text-shadow: 1px 1px 0 #fff;
}
</style>
